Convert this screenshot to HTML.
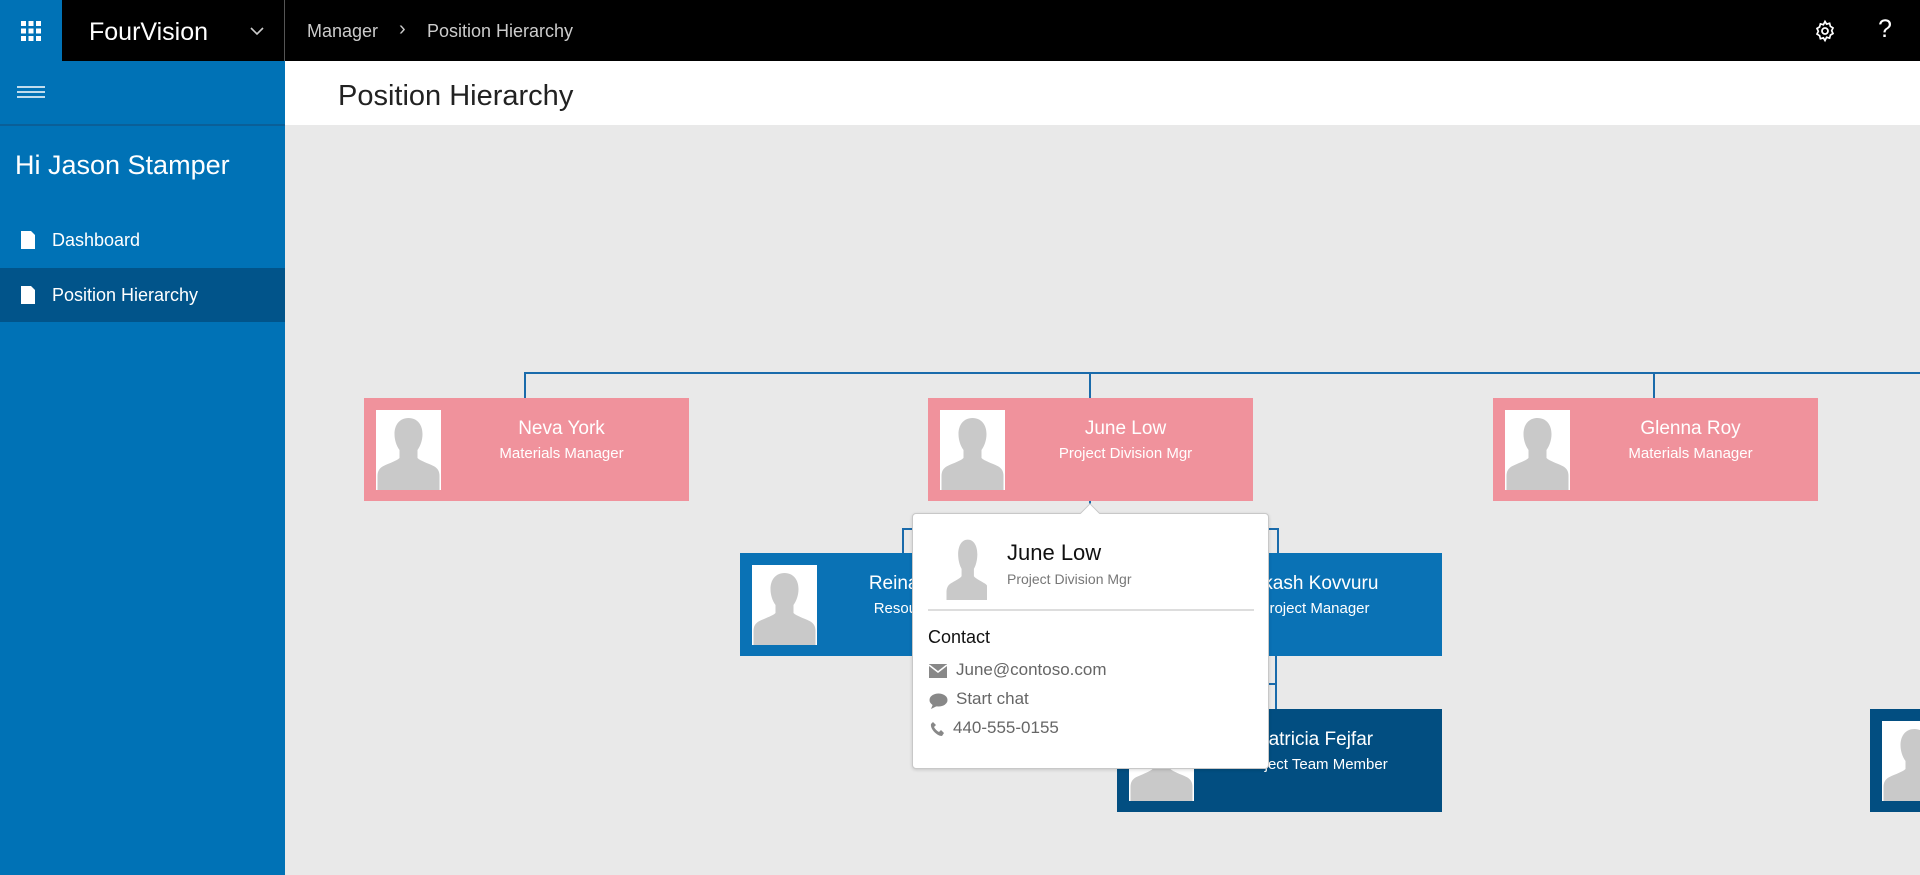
<!DOCTYPE html>
<html><head><meta charset="utf-8"><style>
*{margin:0;padding:0;box-sizing:border-box}
body{width:1920px;height:875px;overflow:hidden;background:#e9e9e9;font-family:"Segoe UI","Liberation Sans",sans-serif;position:relative}
.abs{position:absolute}
.top{left:0;top:0;width:1920px;height:61px;background:#000}
.waffle{left:0;top:0;width:62px;height:61px;background:#0072b6}
.side{left:0;top:61px;width:285px;height:814px;background:#0072b6}
.hdr{left:285px;top:61px;width:1635px;height:64px;background:#fff}
.box{position:absolute;width:325px;height:103px;color:#fff;font-family:"Liberation Sans",sans-serif}
.box .ph{position:absolute;left:12px;top:12px;width:65px;height:80px;background:#fff;overflow:hidden}
.box .t{position:absolute;left:70px;right:0;text-align:center}
.box .n{top:20px;font-size:19px}
.box .s{top:47px;font-size:15px}
.pink{background:#f0929c}.blue{background:#0a72b5}.dark{background:#024e81}
.ln{position:absolute;background:#1a6bab}
.pop{left:912px;top:513px;width:357px;height:256px;background:#fff;border:1px solid #c8c8c8;border-radius:4px;box-shadow:0 1px 3px rgba(0,0,0,.15)}
.pt{position:absolute;left:43px;font-size:17px;color:#666}
</style></head><body>
<svg width="0" height="0" style="position:absolute"><defs><symbol id="sil" viewBox="0 0 65 80"><rect width="65" height="80" fill="#fff"/><path d="M32.5 8c-9 0-14 7-14 16 0 6 2 12 5 16l0 8c-3 3-10 5-16 8-4 2-6 5-6 10v14h62v-14c0-5-2-8-6-10-6-3-13-5-16-8l0-8c3-4 5-10 5-16 0-9-5-16-14-16z" fill="#c9c9c9"/></symbol></defs></svg>
<div class="abs top"></div>
<div class="abs waffle"><svg width="62" height="61"><g fill="#fff"><rect x="21" y="21" width="5" height="5"/><rect x="28.5" y="21" width="5" height="5"/><rect x="36" y="21" width="5" height="5"/><rect x="21" y="28.5" width="5" height="5"/><rect x="28.5" y="28.5" width="5" height="5"/><rect x="36" y="28.5" width="5" height="5"/><rect x="21" y="36" width="5" height="5"/><rect x="28.5" y="36" width="5" height="5"/><rect x="36" y="36" width="5" height="5"/></g></svg></div>
<div class="abs" style="left:89px;top:18px;color:#fff;font-size:25px">FourVision</div>
<svg class="abs" style="left:249px;top:25px" width="16" height="12"><path d="M2 3l6 6 6-6" stroke="#ccc" stroke-width="1.6" fill="none"/></svg>
<div class="abs" style="left:284px;top:0;width:1px;height:61px;background:#555"></div>
<div class="abs" style="left:307px;top:21px;color:#ccc;font-size:18px">Manager</div>
<div class="abs" style="left:399px;top:18px;color:#ccc;font-size:20px">›</div>
<div class="abs" style="left:427px;top:21px;color:#ccc;font-size:18px">Position Hierarchy</div>
<svg class="abs" style="left:1813px;top:19px" width="24" height="24" viewBox="0 0 24 24"><circle cx="12" cy="12" r="3" fill="none" stroke="#fff" stroke-width="1.8"/><path d="M12 2.5l1.6 2.6 3-.8.8 3 2.6 1.6-1.3 2.8 1.3 2.8-2.6 1.6-.8 3-3-.8L12 21.5l-1.6-2.6-3 .8-.8-3L4 15.1l1.3-2.8L4 9.5l2.6-1.6.8-3 3 .8z" fill="none" stroke="#fff" stroke-width="1.7"/></svg>
<div class="abs" style="left:1878px;top:15px;color:#fff;font-size:25px">?</div>
<div class="abs side"></div>
<div class="abs" style="left:0;top:124px;width:285px;height:2px;background:#0a5f98"></div>
<svg class="abs" style="left:17px;top:85px" width="28" height="16"><g stroke="#fff" stroke-width="1.5"><path d="M0 2h28M0 7h28M0 12h28"/></g></svg>
<div class="abs" style="left:15px;top:150px;color:#fff;font-size:27px">Hi Jason Stamper</div>
<svg class="abs" style="left:20px;top:230px" width="16" height="20"><path d="M1 1h10l4 4v14H1z" fill="#fff"/></svg>
<div class="abs" style="left:52px;top:230px;color:#fff;font-size:18px">Dashboard</div>
<div class="abs" style="left:0;top:268px;width:285px;height:54px;background:#01548a"></div>
<svg class="abs" style="left:20px;top:285px" width="16" height="20"><path d="M1 1h10l4 4v14H1z" fill="#fff"/></svg>
<div class="abs" style="left:52px;top:285px;color:#fff;font-size:18px">Position Hierarchy</div>
<div class="abs hdr"></div>
<div class="abs" style="left:338px;top:80px;color:#222;font-size:29px">Position Hierarchy</div>

<div class="ln" style="left:525px;top:372px;width:1395px;height:2px"></div>
<div class="ln" style="left:524px;top:372px;width:2px;height:26px"></div>
<div class="ln" style="left:1089px;top:372px;width:2px;height:26px"></div>
<div class="ln" style="left:1653px;top:372px;width:2px;height:26px"></div>
<div class="ln" style="left:1089px;top:501px;width:2px;height:28px"></div>
<div class="ln" style="left:902px;top:528px;width:377px;height:2px"></div>
<div class="ln" style="left:902px;top:528px;width:2px;height:25px"></div>
<div class="ln" style="left:1277px;top:528px;width:2px;height:25px"></div>
<div class="ln" style="left:1275px;top:656px;width:2px;height:53px"></div>
<div class="ln" style="left:1265px;top:683px;width:12px;height:2px"></div>

<div class="box pink" style="left:364px;top:398px"><svg class="ph"><use href="#sil"/></svg><div class="t n">Neva York</div><div class="t s">Materials Manager</div></div>
<div class="box pink" style="left:928px;top:398px"><svg class="ph"><use href="#sil"/></svg><div class="t n">June Low</div><div class="t s">Project Division Mgr</div></div>
<div class="box pink" style="left:1493px;top:398px"><svg class="ph"><use href="#sil"/></svg><div class="t n">Glenna Roy</div><div class="t s">Materials Manager</div></div>
<div class="box blue" style="left:740px;top:553px"><svg class="ph"><use href="#sil"/></svg><div class="t n">Reina Cabatana</div><div class="t s">Resource Manager</div></div>
<div class="box blue" style="left:1117px;top:553px"><svg class="ph"><use href="#sil"/></svg><div class="t n">Akash Kovvuru</div><div class="t s">Project Manager</div></div>
<div class="box dark" style="left:1117px;top:709px"><svg class="ph"><use href="#sil"/></svg><div class="t n">Patricia Fejfar</div><div class="t s">Project Team Member</div></div>
<div class="box dark" style="left:1870px;top:709px"><svg class="ph"><use href="#sil"/></svg></div>

<div class="abs pop">
<div class="abs" style="left:170px;top:-8px;width:14px;height:14px;background:#fff;border-left:1px solid #c8c8c8;border-top:1px solid #c8c8c8;transform:rotate(45deg)"></div>
<svg class="abs" style="left:22px;top:22px" width="52" height="64" viewBox="8 4 50 70"><path d="M32.5 8c-9 0-14 7-14 16 0 6 2 12 5 16l0 8c-3 3-10 5-16 8-4 2-6 5-6 10v14h62v-14c0-5-2-8-6-10-6-3-13-5-16-8l0-8c3-4 5-10 5-16 0-9-5-16-14-16z" fill="#c9c9c9" transform="translate(8.5 0) scale(.75 1) translate(10 0)"/></svg>
<div class="abs" style="left:94px;top:26px;font-size:22px;color:#111">June Low</div>
<div class="abs" style="left:94px;top:57px;font-size:14px;color:#777">Project Division Mgr</div>
<div class="abs" style="left:15px;top:95px;width:326px;height:2px;background:#ddd"></div>
<div class="abs" style="left:15px;top:113px;font-size:18px;color:#111">Contact</div>
<svg class="abs" style="left:16px;top:150px" width="18" height="14"><rect width="18" height="14" fill="#888"/><path d="M0 1l9 7 9-7" stroke="#fff" stroke-width="1.5" fill="none"/></svg>
<div class="pt" style="top:146px">June@contoso.com</div>
<svg class="abs" style="left:16px;top:179px" width="19" height="17"><ellipse cx="9.5" cy="7" rx="9" ry="6.5" fill="#888"/><path d="M4 11l-2 5 6-3z" fill="#888"/></svg>
<div class="pt" style="top:175px">Start chat</div>
<svg class="abs" style="left:17px;top:207px" width="14" height="16" viewBox="0 0 14 16"><path d="M3 1l3 3-2 2c1 2 3 4 5 5l2-2 3 3-2 3C7 15 0 8 1 3z" fill="#888"/></svg>
<div class="pt" style="top:204px;left:40px">440-555-0155</div>
</div>
</body></html>
